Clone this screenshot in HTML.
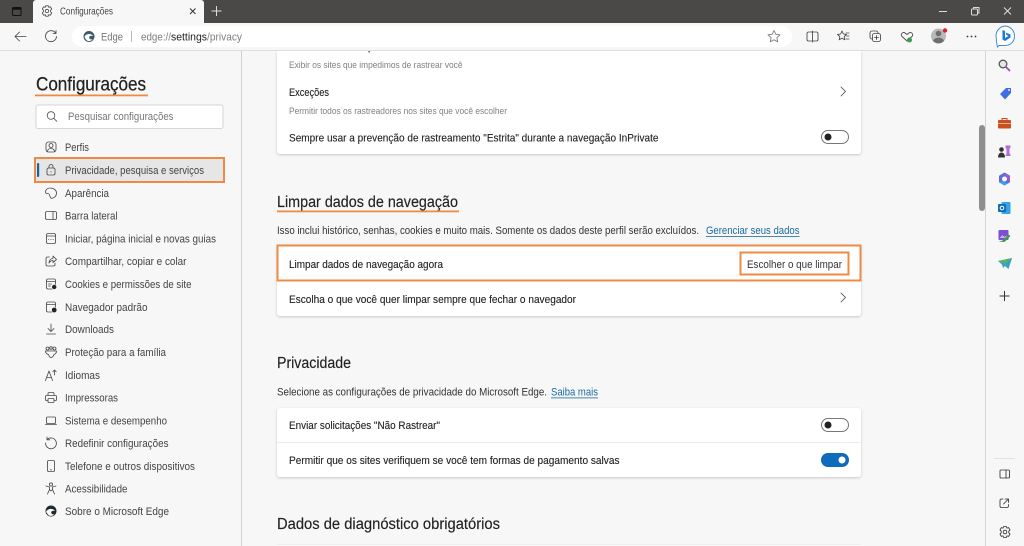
<!DOCTYPE html>
<html lang="pt-BR"><head><meta charset="utf-8"><title>Configurações</title>
<style>
html,body{margin:0;padding:0;width:1024px;height:546px;overflow:hidden;background:#f7f7f7}
svg{display:block}
text{font-family:"Liberation Sans",sans-serif;font-size:10.800px;fill:#333;white-space:pre}
.n text{fill:#444;font-size:11px}
.i{fill:none;stroke:#4a4a4a;stroke-width:.85;stroke-linecap:round;stroke-linejoin:round}
.b{fill:#222;stroke:#222;stroke-width:.12}
.s{font-size:9.400px;fill:#808080}
.h{font-size:15.500px;fill:#222;stroke:#222;stroke-width:.15}
.l{fill:#1a6a9e}
.o{fill:none;stroke:#ed8b45;stroke-width:2}
.c{fill:#fff;filter:url(#sh)}
</style></head><body>
<svg width="1024" height="546" viewBox="0 0 1024 546" xmlns="http://www.w3.org/2000/svg">
<defs><filter id="sh" x="-5%" y="-20%" width="110%" height="140%"><feDropShadow dx="0" dy="1" stdDeviation="1.200" flood-color="#000" flood-opacity=".2"/></filter></defs>
<rect width="1024" height="546" fill="#f7f7f7"/>
<!-- title bar -->
<rect width="1024" height="23" fill="#4b4947"/>
<path d="M33 23V3a3 3 0 0 1 3-3H201a3 3 0 0 1 3 3V23z" fill="#f7f7f7"/>
<g fill="none" stroke="#111" stroke-width="1"><rect x="12.500" y="7.500" width="8.500" height="8" rx="1"/></g><rect x="12.500" y="7.500" width="8.500" height="2.200" fill="#111"/>
<g transform="translate(47,11)" class="i"><circle r="1.700"/><path d="M-1.300-5.200h2.600l.5 1.500 1.600-.5 1.300 2.200-1.100 1.200v1.600l1.100 1.200-1.300 2.200-1.600-.5-.5 1.500h-2.600l-.5-1.500-1.600.5-1.300-2.200 1.100-1.200v-1.600l-1.100-1.200 1.300-2.200 1.600.5z"/></g>
<text x="60" y="14.500" textLength="53" lengthAdjust="spacingAndGlyphs" style="font-size:10px;fill:#444">Configurações</text>
<path d="M190 8.500l5.500 5.500M195.500 8.500l-5.500 5.500" stroke="#333" stroke-width="1" fill="none"/>
<path d="M216.500 6v10M211.500 11h10" stroke="#ddd" stroke-width="1" fill="none"/>
<path d="M939 11.500h8" stroke="#ddd" stroke-width="1"/>
<g fill="none" stroke="#ddd" stroke-width="1"><rect x="971.500" y="9" width="6" height="6" rx="1"/><path d="M973.500 9V7.500h5.500v5.500h-1.500"/></g>
<path d="M1004 7.500l7 7M1011 7.500l-7 7" stroke="#ddd" stroke-width="1" fill="none"/>
<!-- toolbar -->
<rect y="23" width="1024" height="27" fill="#f7f7f7"/>
<rect x="72" y="26" width="720" height="21" rx="10.500" fill="#fff"/>
<path d="M26 36.500H15M19.500 32l-4.500 4.500 4.500 4.500" class="i" style="stroke:#444"/>
<path d="M55.500 33a5.500 5.500 0 1 0 1 3.500M56 30.500v3h-3" class="i" style="stroke:#444"/>
<circle cx="89" cy="36.500" r="5.500" fill="#3e5a68"/><path d="M84.500 37c1-3.500 7-4 8.500-1-2 -.8-4 0-3.800 1.800.2 1.500 2 2 3.500 1.500-1.500 2-5 2.500-6.500.5-.8-1-1-2-1.700-2.800z" fill="#fff"/>
<text x="101" y="40.500" textLength="22" lengthAdjust="spacingAndGlyphs" style="fill:#777">Edge</text>
<path d="M131.500 31v11" stroke="#bbb"/>
<text x="141" y="40.500" textLength="30" lengthAdjust="spacingAndGlyphs" style="fill:#808080">edge://</text>
<text x="171" y="40.500" textLength="36" lengthAdjust="spacingAndGlyphs" style="fill:#222">settings</text>
<text x="207" y="40.500" textLength="35" lengthAdjust="spacingAndGlyphs" style="fill:#808080">/privacy</text>
<path d="M774 30.500l1.800 3.800 4.200.5-3.100 2.900.8 4.100-3.700-2-3.700 2 .8-4.100-3.100-2.900 4.200-.5z" class="i" style="stroke:#777"/>
<g class="i" style="stroke:#444"><rect x="807" y="32" width="11" height="9" rx="1.500"/><path d="M812.500 31v11"/>
<path d="M842 31l1.400 3 3.100.4-2.300 2.200.6 3.200-2.800-1.600-2.800 1.600.6-3.200-2.300-2.200 3.100-.4zM846 33h3M846.500 36h2.500M846 39h3"/>
<rect x="870" y="31" width="8" height="8" rx="2"/><rect x="872.500" y="33.500" width="8" height="8" rx="2" fill="#f7f7f7"/><path d="M876.500 35.500v4M874.500 37.500h4"/>
<path d="M907 41l-5-4.500c-2-2.500 1-5 3-3.500l2 1.500 2-1.500c2-1.500 5 1 3 3.500z"/></g>
<circle cx="909.500" cy="40" r="2.500" fill="#3d9a4f"/>
<circle cx="938.500" cy="36" r="7.500" fill="#b9b9b9"/><circle cx="938.500" cy="33.500" r="2.800" fill="#6e6e6e"/><path d="M933 41c1-4.500 10-4.500 11 0a7.500 7.500 0 0 1-11 0z" fill="#6e6e6e"/><circle cx="945" cy="30.500" r="2.200" fill="#d8232a"/>
<g fill="#333"><circle cx="967.500" cy="36.500" r=".9"/><circle cx="971.500" cy="36.500" r=".9"/><circle cx="975.500" cy="36.500" r=".9"/></g>
<path d="M1005 26a10 10 0 0 1 9.500 10c0 5.500-4 9.500-9.500 9.500h-6l-1.500 1.500c-.5-1-1-6-1.500-11A10 10 0 0 1 1005 26z" fill="#fff" stroke="#3f8fd2" stroke-width="1"/>
<path d="M1002.500 30l2.500 1v7l3.500-2-2-1-1-2.500 5 2v3l-5.500 3.500-2.500-1.500z" fill="#1a78d6"/>
<!-- sidebar -->
<rect x="241" y="51" width="1" height="495" fill="#cfcfcf"/>
<text x="36" y="90.500" textLength="110" lengthAdjust="spacingAndGlyphs" style="font-size:19px;fill:#222;stroke:#222;stroke-width:.25">Configurações</text>
<rect x="35" y="94.500" width="113" height="1.800" fill="#ed8b45"/>
<rect x="36" y="105" width="187" height="23.500" rx="2" fill="#fff" stroke="#d6d6d6"/>
<g class="i" style="stroke:#555"><circle cx="51" cy="115.500" r="3.800"/><path d="M53.800 118.300l3 3"/></g>
<text x="68" y="120" textLength="105.500" lengthAdjust="spacingAndGlyphs" style="fill:#777">Pesquisar configurações</text>
<rect x="35" y="158" width="189" height="24" fill="#e6e6e6"/>
<rect x="35" y="158" width="189" height="24" class="o"/>
<rect x="37" y="163" width="2.200" height="14" rx="1" fill="#1464a8"/>
<g class="n">
<text x="65" y="151" textLength="24" lengthAdjust="spacingAndGlyphs">Perfis</text>
<text x="65" y="174" textLength="139" lengthAdjust="spacingAndGlyphs">Privacidade, pesquisa e serviços</text>
<text x="65" y="197" textLength="44" lengthAdjust="spacingAndGlyphs">Aparência</text>
<text x="65" y="219.500" textLength="52.500" lengthAdjust="spacingAndGlyphs">Barra lateral</text>
<text x="65" y="242.500" textLength="151" lengthAdjust="spacingAndGlyphs">Iniciar, página inicial e novas guias</text>
<text x="65" y="265" textLength="121.500" lengthAdjust="spacingAndGlyphs">Compartilhar, copiar e colar</text>
<text x="65" y="288" textLength="126.500" lengthAdjust="spacingAndGlyphs">Cookies e permissões de site</text>
<text x="65" y="311" textLength="82.500" lengthAdjust="spacingAndGlyphs">Navegador padrão</text>
<text x="65" y="333" textLength="49" lengthAdjust="spacingAndGlyphs">Downloads</text>
<text x="65" y="356" textLength="101" lengthAdjust="spacingAndGlyphs">Proteção para a família</text>
<text x="65" y="379" textLength="35" lengthAdjust="spacingAndGlyphs">Idiomas</text>
<text x="65" y="401.500" textLength="53" lengthAdjust="spacingAndGlyphs">Impressoras</text>
<text x="65" y="424.500" textLength="102" lengthAdjust="spacingAndGlyphs">Sistema e desempenho</text>
<text x="65" y="447" textLength="103.500" lengthAdjust="spacingAndGlyphs">Redefinir configurações</text>
<text x="65" y="470" textLength="130" lengthAdjust="spacingAndGlyphs">Telefone e outros dispositivos</text>
<text x="65" y="492.500" textLength="62.500" lengthAdjust="spacingAndGlyphs">Acessibilidade</text>
<text x="65" y="515" textLength="104" lengthAdjust="spacingAndGlyphs">Sobre o Microsoft Edge</text>
</g>
<!-- sidebar icons -->
<g class="i">
<g transform="translate(51,147)"><rect x="-5" y="-5" width="10" height="10" rx="2.500"/><circle cy="-1.500" r="2"/><path d="M-3.500 4.500c0-4 7-4 7 0"/></g>
<g transform="translate(51,170)"><rect x="-4" y="-2" width="8" height="7" rx="1.500"/><path d="M-2-2v-1.500a2 2 0 0 1 4 0V-2M0 1.500v.5"/></g>
<g transform="translate(51,193)"><path d="M-1-5C-4-5-5.500-3-5.500-1c0 1.500 1.500 1.500 2.500 1.500S-1.500 1.500-1 3.500.5 5.500 2 5c2.500-1 3.500-3 3.500-5C5.500-3 2.500-5-1-5z"/></g>
<g transform="translate(51,215.500)"><rect x="-5.500" y="-4" width="11" height="8" rx="1.500"/><path d="M2-4v8"/></g>
<g transform="translate(51,238.500)"><rect x="-4.500" y="-5" width="9" height="10" rx="1.500"/><path d="M-4.500-2.500h9M-2.500 1h.3M-.2 1h.3M2 1h.3"/></g>
<g transform="translate(51,261)"><path d="M-1.500-4H-3.500A1.500 1.500 0 0 0-5-2.500v6A1.500 1.500 0 0 0-3.500 5h6A1.500 1.500 0 0 0 4 3.500V2M-2 2C-2-1 0-2.500 2-2.500V-5L5.500-1.500 2 1.500V-.5C.5-.5-1 .5-2 2z"/></g>
<g transform="translate(51,284)"><rect x="-4.500" y="-5" width="9" height="10" rx="1.500"/><path d="M-4.500-2.500h9M-2.500 0h3M-2.500 2h2"/><circle cx="3.200" cy="3" r="2.500" fill="#222" stroke="#f7f7f7" stroke-width=".6"/></g>
<g transform="translate(51,307)"><rect x="-4.500" y="-5" width="9" height="10" rx="1.500"/><path d="M-4.500-2.500h9"/><circle cx="3.200" cy="3" r="2.700" fill="#222" stroke="#f7f7f7" stroke-width=".6"/></g>
<g transform="translate(51,329)"><path d="M0-5V2.500M-3-.5L0 2.500 3-.5M-4.500 5h9"/></g>
<g transform="translate(51,352)"><circle cx="-3.500" cy="-3.500" r="1.500"/><circle cy="-4" r="1.300"/><circle cx="3.500" cy="-3.500" r="1.500"/><path d="M-5.500-1h11c0 2-1 3-2.500 3.500-.5 1.500-1.500 3-3 3S-2 4-2.500 2.500C-4.500 2-5.500 1-5.500-1z"/></g>
<g transform="translate(51,375)"><path d="M-5.500 5.500L-2-4 1.500 5.500M-4.300 2.500h4.600M3.500 0v-5M1.800-3.300l1.700-1.700 1.700 1.700"/></g>
<g transform="translate(51,397.500)"><path d="M-3-2v-2a1 1 0 0 1 1-1h4a1 1 0 0 1 1 1v2M-3 3h-1.500a1 1 0 0 1-1-1v-3a1 1 0 0 1 1-1h9a1 1 0 0 1 1 1v3a1 1 0 0 1-1 1H3"/><rect x="-3" y="1" width="6" height="4" rx=".8"/></g>
<g transform="translate(51,420.500)"><rect x="-4.500" y="-3.500" width="9" height="6.500" rx="1"/><path d="M-5.500 4h11"/></g>
<g transform="translate(51,443)"><path d="M-3.800-3.500A5.400 5.400 0 1 1-5.400 0M-4-6v2.800h2.800"/></g>
<g transform="translate(51,466)"><rect x="-3.500" y="-5.500" width="7" height="11" rx="1.300"/><path d="M-.5 3.800h1"/></g>
<g transform="translate(51,488.500)"><circle cy="-4" r="1.600"/><path d="M-5-2.500L-1.500-1.500V1L-3.500 5.500M5-2.500L1.500-1.500V1L3.500 5.500M-1.500 1L0 2.500 1.500 1"/></g>
</g>
<circle cx="51" cy="511" r="5.500" fill="#1f2a30"/><path d="M46 512c1-3.500 7-4.500 9-1-2-.8-4 0-3.800 1.800.2 1.300 1.800 2 3.300 1.500-1.500 2-5 2.200-6.500.3-.8-1-1.200-2-2-2.600z" fill="#f7f7f7"/>
<!-- card 1 -->
<path d="M277 51H861V151a3 3 0 0 1-3 3H280a3 3 0 0 1-3-3z" class="c"/>
<rect x="0" y="50" width="1024" height="1" fill="#dedede"/>
<rect x="368.500" y="51" width="1.200" height="1.500" fill="#333"/>
<text x="289" y="68" textLength="173.500" lengthAdjust="spacingAndGlyphs" class="s">Exibir os sites que impedimos de rastrear você</text>
<text x="289" y="96" textLength="40" lengthAdjust="spacingAndGlyphs" class="b">Exceções</text>
<path d="M841 87l4.500 4.500-4.500 4.500" class="i"/>
<text x="289" y="114" textLength="218" lengthAdjust="spacingAndGlyphs" class="s">Permitir todos os rastreadores nos sites que você escolher</text>
<text x="289" y="141.500" textLength="369.500" lengthAdjust="spacingAndGlyphs" class="b">Sempre usar a prevenção de rastreamento "Estrita" durante a navegação InPrivate</text>
<rect x="821.500" y="130.500" width="27" height="13" rx="6.500" fill="#fff" stroke="#777"/><circle cx="828" cy="137" r="3.500" fill="#222"/>
<!-- clear -->
<text x="277" y="207" textLength="181" lengthAdjust="spacingAndGlyphs" class="h">Limpar dados de navegação</text>
<rect x="277" y="210.500" width="182" height="1.800" fill="#ed8b45"/>
<text x="277" y="234" textLength="422" lengthAdjust="spacingAndGlyphs">Isso inclui histórico, senhas, cookies e muito mais. Somente os dados deste perfil serão excluídos.</text>
<text x="706" y="234" textLength="93.500" lengthAdjust="spacingAndGlyphs" class="l">Gerenciar seus dados</text>
<rect x="706" y="236" width="93.500" height=".8" fill="#1a6a9e"/>
<path d="M277 245H861V313a3 3 0 0 1-3 3H280a3 3 0 0 1-3-3z" class="c"/>
<rect x="277.500" y="245.500" width="583" height="35" class="o"/>
<text x="289" y="268" textLength="154" lengthAdjust="spacingAndGlyphs" class="b">Limpar dados de navegação agora</text>
<rect x="740.500" y="252.500" width="108" height="22" class="o"/>
<text x="747" y="268" textLength="95" lengthAdjust="spacingAndGlyphs">Escolher o que limpar</text>
<text x="289" y="303" textLength="287" lengthAdjust="spacingAndGlyphs" class="b">Escolha o que você quer limpar sempre que fechar o navegador</text>
<path d="M841 293l4.500 4.500-4.500 4.500" class="i"/>
<!-- privacy -->
<text x="277" y="368" textLength="74" lengthAdjust="spacingAndGlyphs" class="h">Privacidade</text>
<text x="277" y="395.500" textLength="270" lengthAdjust="spacingAndGlyphs">Selecione as configurações de privacidade do Microsoft Edge.</text>
<text x="551" y="395.500" textLength="47" lengthAdjust="spacingAndGlyphs" class="l">Saiba mais</text>
<rect x="551" y="397.500" width="47" height=".8" fill="#1a6a9e"/>
<rect x="277" y="408" width="584" height="69" rx="3" class="c"/>
<rect x="277" y="442" width="584" height="1" fill="#ececec"/>
<text x="289" y="429" textLength="151" lengthAdjust="spacingAndGlyphs" class="b">Enviar solicitações "Não Rastrear"</text>
<text x="289" y="464" textLength="330.500" lengthAdjust="spacingAndGlyphs" class="b">Permitir que os sites verifiquem se você tem formas de pagamento salvas</text>
<rect x="821.500" y="418.500" width="27" height="13" rx="6.500" fill="#fff" stroke="#777"/><circle cx="828" cy="425" r="3.500" fill="#222"/>
<rect x="821" y="453" width="28" height="14" rx="7" fill="#0f6cbd"/><circle cx="842" cy="460" r="3.500" fill="#fff"/>
<!-- diag -->
<text x="277" y="529" textLength="223" lengthAdjust="spacingAndGlyphs" class="h">Dados de diagnóstico obrigatórios</text>
<rect x="277" y="545" width="584" height="3" fill="#fff"/><rect x="277" y="544.500" width="584" height=".6" fill="#e6e6e6"/>
<!-- scrollbar and right rail -->
<rect x="979" y="125" width="6" height="86" rx="3" fill="#8f8f8f"/>
<rect x="985" y="51" width="1" height="495" fill="#d4d4d4"/>
<rect x="986" y="51" width="38" height="495" fill="#f7f7f7"/>
<g transform="translate(1004,65)"><circle cx="-1" cy="-1" r="3.800" fill="#dfe7ef" stroke="#555" stroke-width="1.300"/><path d="M2 2l3.500 3.500" stroke="#a24bb5" stroke-width="1.800" stroke-linecap="round"/></g>
<path d="M1000 94l6-6h5v5l-6 6.500z" fill="#3f6fe0"/><circle cx="1009" cy="90" r="1" fill="#dbe6ff"/>
<g transform="translate(1004.500,123)"><rect x="-6.500" y="-3" width="13" height="8.500" rx="1" fill="#c8501e"/><path d="M-2.500-3v-1.500h5V-3" fill="none" stroke="#c8501e"/><rect x="-6.500" y="0" width="13" height=".8" fill="#f3c5a8"/></g>
<g transform="translate(1004,152)"><circle cx="-2.500" cy="-2.500" r="2.300" fill="#333"/><path d="M-6 5.500c0-3 1.500-5 3.500-5s3.500 2 3.500 5z" fill="#333"/><path d="M1.500-6.500h5v2l-1 1v5l1 1v1.500h-5V3l1-1v-5l-1-1z" fill="#b06fd8"/></g>
<g transform="translate(1004.500,179)"><path d="M0-6.500L5.500-3.200V3.200L0 6.500-5.500 3.200V-3.200z" fill="#5b6fd8"/><path d="M0-6.500L5.500-3.200V3.200L2 1V-2z" fill="#9a5ad0"/><circle r="2.500" fill="#f7f7f7"/><path d="M-5.500 3.200L0 6.500 3 4.500-2 2z" fill="#3aa0e0"/></g>
<g transform="translate(1004.500,208)"><rect x="-3" y="-6" width="9" height="12" rx="1" fill="#35a3e6"/><rect x="-6.500" y="-4" width="8" height="8" rx="1" fill="#0f6cbd"/><circle cx="-2.500" cy="0" r="1.800" fill="none" stroke="#fff" stroke-width="1"/></g>
<g transform="translate(1004.500,236)"><rect x="-6" y="-6" width="10" height="10" rx="1" fill="#7a4fd0"/><path d="M-5 2l3-3 2 2 2-1.500 2 2.500z" fill="#c9b3f0"/><path d="M-6 5.500l4-1 6-6 2 1.500-6 6z" fill="#3f9a4f"/></g>
<path d="M998 261l14-3-3.500 11-3.500-3-2 2-1-3.500z" fill="#35a0c8"/><path d="M998 261l14-3-7 6z" fill="#5bb06a"/>
<path d="M1004.500 291v10M999.500 296h10" stroke="#333" fill="none"/>
<rect x="994" y="458" width="21" height="1" fill="#e2e2e2"/>
<g class="i" style="stroke:#333"><rect x="1000" y="470" width="9.500" height="8" rx="1"/><path d="M1006 470v8"/>
<path d="M1003 499h-1.500a1.500 1.500 0 0 0-1.500 1.500v5.500a1.500 1.500 0 0 0 1.500 1.500h5.500a1.500 1.500 0 0 0 1.500-1.500v-1.500M1003.500 504l5-5M1005 499h3.500v3.500"/></g>
<g transform="translate(1005,532)" class="i" style="stroke:#333"><circle r="1.800"/><path d="M-1.400-5.500h2.800l.5 1.600 1.700-.5 1.400 2.300-1.200 1.300v1.600l1.200 1.300-1.400 2.300-1.700-.5-.5 1.600h-2.800l-.5-1.600-1.700.5-1.400-2.300 1.200-1.300v-1.600l-1.200-1.300 1.400-2.300 1.700.5z"/></g>
</svg>
</body></html>
